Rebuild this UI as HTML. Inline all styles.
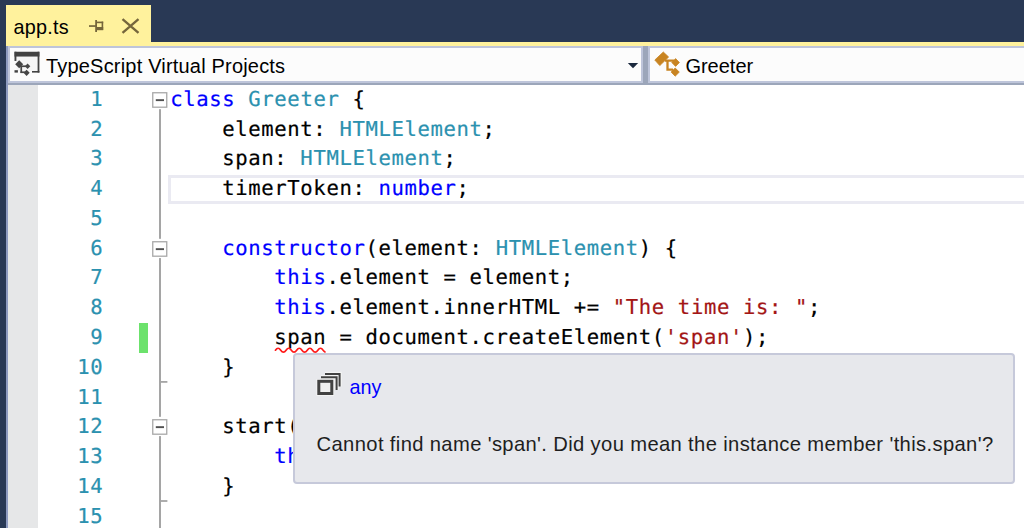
<!DOCTYPE html>
<html lang="en">
<head>
<meta charset="utf-8">
<title>app.ts</title>
<style>
  html, body { margin: 0; padding: 0; }
  body {
    width: 1024px; height: 528px; overflow: hidden; position: relative;
    background: #293955;
    font-family: "Liberation Sans", sans-serif;
  }
  .abs { position: absolute; }
  /* ---------- tab strip ---------- */
  #tab { left: 6px; top: 5px; width: 145px; height: 41px; background: #fff29d; }
  #tabline { left: 6px; top: 42px; width: 1018px; height: 4px; background: #fff29d; }
  .ui { font-family: "Liberation Sans", sans-serif; white-space: pre; line-height: 1; }
  #tabtxt { left: 13.6px; top: 18px; font-size: 19.8px; letter-spacing: 0.22px; color: #000; }
  /* ---------- navigation bar ---------- */
  #docbg { left: 6px; top: 46px; width: 1018px; height: 482px; background: #fff; }
  #leftedge { left: 6px; top: 46px; width: 2px; height: 482px; background: #8e9bc0; }
  #navbar { left: 8px; top: 46px; width: 1016px; height: 39px; background: #9ca6ba; }
  .combo { top: 46px; height: 32.5px; border: 2px solid #bec5da; background: #fcfcfc; box-sizing: content-box; }
  #combo1 { left: 8px; width: 631px; }
  #combo2 { left: 648px; width: 380px; }
  #navshade { left: 8px; top: 82.5px; width: 1016px; height: 2.5px; background: #9ca6ba; }
  #navtxt1 { left: 46px; top: 56.4px; font-size: 20px; letter-spacing: 0.19px; color: #000; }
  #navtxt2 { left: 685.4px; top: 56.4px; font-size: 20px; color: #000; }
  /* ---------- editor ---------- */
  #gutter { left: 8px; top: 85px; width: 29.5px; height: 443px; background: #e6e7e8; }
  .mono { font-family: "DejaVu Sans Mono", "Liberation Mono", monospace; font-size: 20.6px; letter-spacing: 0.618px; line-height: 30px; white-space: pre; text-rendering: geometricPrecision; -webkit-text-stroke: 0.2px currentColor; }
  .ln { left: 51.2px; width: 52px; text-align: right; color: #2b91af; }
  .cl { left: 170.2px; color: #000; }
  .k { color: #0000ff; }
  .t { color: #2b91af; }
  .s { color: #a31515; }
  #curline { left: 168px; top: 174.5px; width: 900px; height: 23.5px; border: 3px solid #eaeaf2; }
  #change { left: 138.6px; top: 323px; width: 9px; height: 29.5px; background: #6ce26c; }
  #outline { left: 0; top: 0; }
  /* ---------- tooltip ---------- */
  #tip { left: 293px; top: 353px; width: 717.5px; height: 126.5px; border: 2px solid #c6c9da; border-radius: 4px; background: #e7e8ec; }
  #tipany { left: 349.5px; top: 378px; font-size: 19.8px; color: #0000ff; }
  #tipmsg { left: 316.6px; top: 434.2px; font-size: 20.2px; letter-spacing: 0.36px; color: #1e1e1e; }
</style>
</head>
<body>
  <!-- tab strip -->
  <div id="tab" class="abs"></div>
  <div id="tabline" class="abs"></div>
  <div id="tabtxt" class="abs ui">app.ts</div>
  <svg class="abs" style="left:86px;top:14px" width="60" height="24" viewBox="0 0 60 24">
    <!-- pin -->
    <g fill="#75663c">
      <rect x="3" y="11.2" width="7" height="1.7"/>
      <rect x="9.2" y="6" width="1.8" height="12"/>
      <rect x="10" y="7.6" width="7.2" height="1.6"/>
      <rect x="15.6" y="7.6" width="1.6" height="8.4"/>
      <rect x="10" y="13" width="7.2" height="3.2"/>
    </g>
    <!-- close -->
    <g stroke="#75663c" stroke-width="2.4" fill="none">
      <path d="M36.5 5.2 L52.5 18.8 M52.5 5.2 L36.5 18.8"/>
    </g>
  </svg>

  <!-- document well -->
  <div id="docbg" class="abs"></div>
  <div id="leftedge" class="abs"></div>
  <div id="navbar" class="abs"></div>
  <div id="combo1" class="abs combo"></div>
  <div id="combo2" class="abs combo"></div>
  <div id="navshade" class="abs"></div>
  <div id="navtxt1" class="abs ui">TypeScript Virtual Projects</div>
  <div id="navtxt2" class="abs ui">Greeter</div>

  <!-- nav bar icons -->
  <svg class="abs" style="left:12px;top:49px" width="30" height="30" viewBox="0 0 30 30">
    <!-- project/window icon -->
    <rect x="4.5" y="7.5" width="21.2" height="14.6" fill="#f5f5f5"/>
    <g fill="#424242">
      <rect x="2.5" y="2.75" width="24.9" height="4.8"/>
      <rect x="25.6" y="2.75" width="1.8" height="20.8"/>
      <rect x="20" y="22" width="7.4" height="1.6"/>
      <rect x="2.5" y="2.75" width="1.9" height="9.2"/>
      <rect x="2.5" y="21.2" width="3.4" height="2.4"/>
    </g>
    <g fill="#464646">
      <path d="M7.2 11.2 L11.2 15.2 L7.2 19.2 L3.2 15.2 Z"/>
      <path d="M15.6 14.6 L18.3 17.3 L15.6 20 L12.9 17.3 Z"/>
      <path d="M14.6 20.7 L17.7 23.8 L14.6 26.9 L11.5 23.8 Z"/>
      <rect x="8" y="16.4" width="6.5" height="1.7"/>
      <rect x="8.4" y="17" width="1.7" height="6.8"/>
      <rect x="8.4" y="22.4" width="4.5" height="1.7"/>
    </g>
  </svg>
  <svg class="abs" style="left:626px;top:60px" width="14" height="10" viewBox="0 0 14 10">
    <path d="M1.8 2.9 L12.2 2.9 L7 8.3 Z" fill="#1b293e"/>
  </svg>
  <svg class="abs" style="left:652px;top:49px" width="30" height="30" viewBox="0 0 30 30">
    <!-- class icon -->
    <g fill="#c88422" stroke="#c88422" stroke-width="0.8" stroke-linejoin="round">
      <path d="M11.3 3 L16.6 8 L7.8 16.6 L2.8 11 Z"/>
      <path d="M23.6 9.6 L27.4 13.5 L23.6 17.4 L19.8 13.5 Z"/>
      <path d="M23.2 19 L27.3 23.1 L23.2 27.2 L19.1 23.1 Z"/>
    </g>
    <path d="M13 11.6 L22 11.6 M15.5 11.6 L15.5 20.6 L21 20.6" stroke="#c88422" stroke-width="2.3" fill="none"/>
  </svg>

  <!-- editor -->
  <div id="gutter" class="abs"></div>
  <div id="curline" class="abs"></div>
  <div id="change" class="abs"></div>
  <div id="lines">
  <div class="abs mono ln" style="top:84.00px">1</div>
  <div class="abs mono cl" style="top:84.00px"><span class="k">class</span> <span class="t">Greeter</span> {</div>
  <div class="abs mono ln" style="top:114.00px">2</div>
  <div class="abs mono cl" style="top:114.00px">    element: <span class="t">HTMLElement</span>;</div>
  <div class="abs mono ln" style="top:143.00px">3</div>
  <div class="abs mono cl" style="top:143.00px">    span: <span class="t">HTMLElement</span>;</div>
  <div class="abs mono ln" style="top:173.00px">4</div>
  <div class="abs mono cl" style="top:173.00px">    timerToken: <span class="k">number</span>;</div>
  <div class="abs mono ln" style="top:203.00px">5</div>
  <div class="abs mono ln" style="top:233.00px">6</div>
  <div class="abs mono cl" style="top:233.00px">    <span class="k">constructor</span>(element: <span class="t">HTMLElement</span>) {</div>
  <div class="abs mono ln" style="top:262.00px">7</div>
  <div class="abs mono cl" style="top:262.00px">        <span class="k">this</span>.element = element;</div>
  <div class="abs mono ln" style="top:292.00px">8</div>
  <div class="abs mono cl" style="top:292.00px">        <span class="k">this</span>.element.innerHTML += <span class="s">"The time is: "</span>;</div>
  <div class="abs mono ln" style="top:322.00px">9</div>
  <div class="abs mono cl" style="top:322.00px">        span = document.createElement(<span class="s">'span'</span>);</div>
  <div class="abs mono ln" style="top:352.00px">10</div>
  <div class="abs mono cl" style="top:352.00px">    }</div>
  <div class="abs mono ln" style="top:382.00px">11</div>
  <div class="abs mono ln" style="top:411.00px">12</div>
  <div class="abs mono cl" style="top:411.00px">    start() {</div>
  <div class="abs mono ln" style="top:441.00px">13</div>
  <div class="abs mono cl" style="top:441.00px">        <span class="k">this</span>.timerToken = setInterval(() =&gt; <span class="k">this</span>.tick(), 500);</div>
  <div class="abs mono ln" style="top:471.00px">14</div>
  <div class="abs mono cl" style="top:471.00px">    }</div>
  <div class="abs mono ln" style="top:501.00px">15</div>
  </div>

  <!-- outlining margin -->
  <svg id="outline" class="abs" width="1024" height="528" viewBox="0 0 1024 528">
    <g fill="#a5a5a5">
      <rect x="159" y="109.2" width="2" height="129.6"/>
      <rect x="159" y="258.1" width="2" height="158.7"/>
      <rect x="159" y="436.1" width="2" height="91.9"/>
      <rect x="160" y="381" width="7.4" height="1.8"/>
      <rect x="160" y="500.1" width="7.4" height="1.8"/>
    </g>
    <g fill="#fff" stroke="#a8a8a8" stroke-width="1.3">
      <rect x="152.75" y="92.75" width="14" height="14.45"/>
      <rect x="152.75" y="241.75" width="14" height="14.45"/>
      <rect x="152.75" y="419.75" width="14" height="14.45"/>
    </g>
    <g fill="#505050">
      <rect x="155.8" y="99.20" width="8.2" height="1.9"/>
      <rect x="155.8" y="248.20" width="8.2" height="1.9"/>
      <rect x="155.8" y="426.20" width="8.2" height="1.9"/>
    </g>
    <!-- error squiggle -->
    <path id="squig" d="M275.45 350.2 Q278.1 346.3 280.75 350.2 T286.05 350.2 T291.35 350.2 T296.65 350.2 T301.95 350.2 T307.25 350.2 T312.55 350.2 T317.85 350.2 T323.15 350.2 Q324.2 351.5 325 351.9" stroke="#ff1a1a" stroke-width="1.7" stroke-linejoin="round" stroke-linecap="round" fill="none"/>
  </svg>

  <!-- tooltip -->
  <div id="tip" class="abs"></div>
  <svg class="abs" style="left:314px;top:370px" width="30" height="28" viewBox="0 0 30 28">
    <g fill="none" stroke="#f4f4f4" stroke-width="4.4">
      <path d="M11 3.9 L25.6 3.9 L25.6 16.4"/>
      <path d="M7 7.2 L22.6 7.2 L22.6 20"/>
      <rect x="4.6" y="11.3" width="13.4" height="12.4"/>
    </g>
    <g fill="none" stroke="#424242">
      <path d="M11 3.9 L25.6 3.9 L25.6 16.4" stroke-width="2"/>
      <path d="M7 7.2 L22.6 7.2 L22.6 20" stroke-width="2"/>
      <rect x="4.8" y="11.3" width="13" height="12.2" stroke-width="3" fill="#f0f0f0"/>
    </g>
  </svg>
  <div id="tipany" class="abs ui">any</div>
  <div id="tipmsg" class="abs ui">Cannot find name 'span'. Did you mean the instance member 'this.span'?</div>

</body>
</html>
